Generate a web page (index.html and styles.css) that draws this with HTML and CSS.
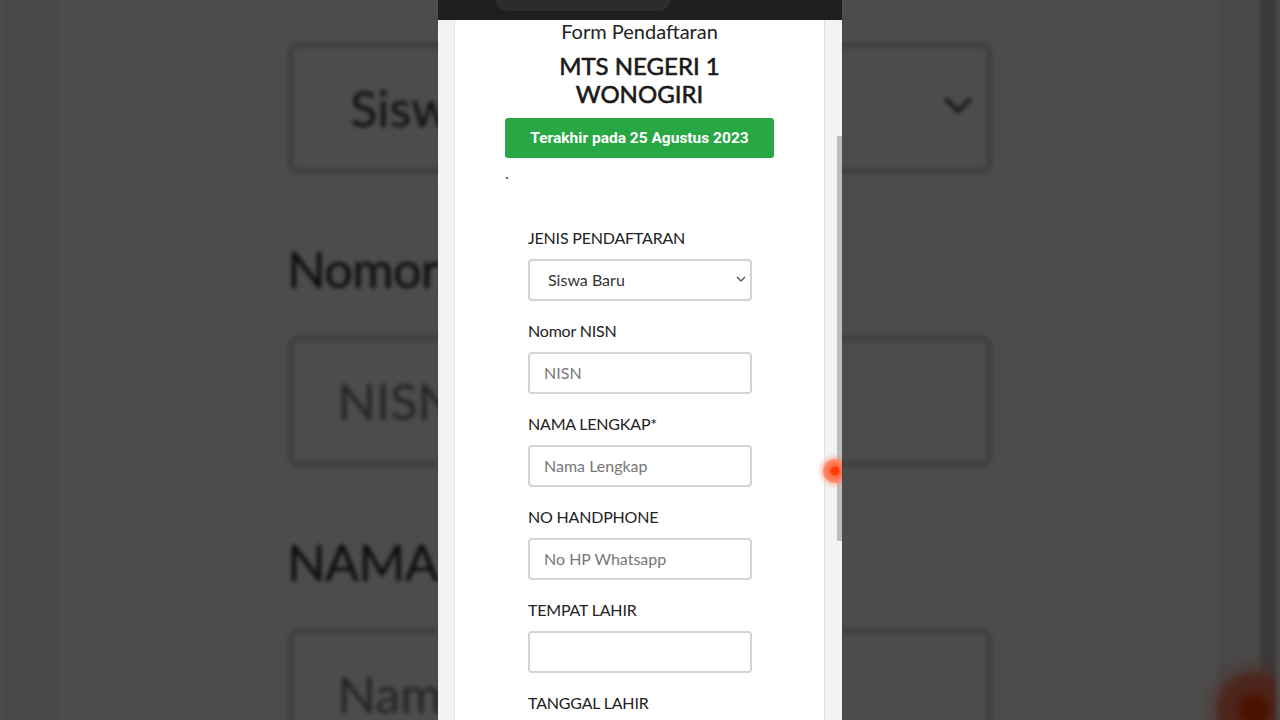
FILE: index.html
```html
<!DOCTYPE html>
<html lang="id">
<head>
    <meta charset="UTF-8">
    <meta name="viewport" content="width=device-width, initial-scale=1.0">
    <title>Form Pendaftaran - MTS Negeri 1 Wonogiri</title>
    <link rel="stylesheet" href="styles.css">
</head>
<body>
    <div class="stage">
        <!-- blurred, zoomed copy of the screen behind the video frame -->
        <div class="backdrop" aria-hidden="true">
            <div class="phone">
                <div class="topbar"><div class="notch"></div></div>
                <div class="viewport">
                    <div class="gutter"></div>
                    <div class="card">
                        <h1 class="title">Form Pendaftaran</h1>
                        <h2 class="school">MTS NEGERI 1<br>WONOGIRI</h2>
                        <div class="deadline">Terakhir pada 25 Agustus 2023</div>
                        <p class="note">.</p>
                        <div class="form">
                            <div class="field">
                                <label>JENIS PENDAFTARAN</label>
                                <div class="select-wrap">
                                    <div class="select">Siswa Baru</div>
                                    <svg class="chevron" width="10" height="6" viewBox="0 0 10 6"><polyline points="1,1 5,5 9,1" fill="none" stroke="#444" stroke-width="1.2"/></svg>
                                </div>
                            </div>
                            <div class="field">
                                <label>Nomor NISN</label>
                                <div class="input placeholder">NISN</div>
                            </div>
                            <div class="field">
                                <label>NAMA LENGKAP*</label>
                                <div class="input placeholder">Nama Lengkap</div>
                            </div>
                            <div class="field">
                                <label>NO HANDPHONE</label>
                                <div class="input placeholder">No HP Whatsapp</div>
                            </div>
                            <div class="field">
                                <label>TEMPAT LAHIR</label>
                                <div class="input"></div>
                            </div>
                            <div class="field">
                                <label>TANGGAL LAHIR</label>
                                <div class="input"></div>
                            </div>
                        </div>
                    </div>
                    <div class="side"></div>
                    <div class="scrollbar"><div class="thumb"></div></div>
                </div>
                <div class="touch"></div>
            </div>
        </div>

        <div class="phone">
            <div class="topbar"><div class="notch"></div></div>
            <div class="viewport">
                <div class="gutter"></div>
                <div class="card">
                    <h1 class="title">Form Pendaftaran</h1>
                    <h2 class="school">MTS NEGERI 1<br>WONOGIRI</h2>
                    <div class="deadline">Terakhir pada 25 Agustus 2023</div>
                    <p class="note">.</p>
                    <form class="form">
                        <div class="field">
                            <label for="jenis">JENIS PENDAFTARAN</label>
                            <div class="select-wrap">
                                <select id="jenis" class="select">
                                    <option>Siswa Baru</option>
                                    <option>Siswa Pindahan</option>
                                </select>
                                <svg class="chevron" width="10" height="6" viewBox="0 0 10 6"><polyline points="1,1 5,5 9,1" fill="none" stroke="#444" stroke-width="1.2"/></svg>
                            </div>
                        </div>
                        <div class="field">
                            <label for="nisn">Nomor NISN</label>
                            <input class="input" type="text" id="nisn" placeholder="NISN">
                        </div>
                        <div class="field">
                            <label for="nama">NAMA LENGKAP*</label>
                            <input class="input" type="text" id="nama" placeholder="Nama Lengkap">
                        </div>
                        <div class="field">
                            <label for="hp">NO HANDPHONE</label>
                            <input class="input" type="text" id="hp" placeholder="No HP Whatsapp">
                        </div>
                        <div class="field">
                            <label for="tempat">TEMPAT LAHIR</label>
                            <input class="input" type="text" id="tempat">
                        </div>
                        <div class="field">
                            <label for="tanggal">TANGGAL LAHIR</label>
                            <input class="input" type="text" id="tanggal">
                        </div>
                    </form>
                </div>
                <div class="side"></div>
                <div class="scrollbar"><div class="thumb"></div></div>
            </div>
            <div class="touch"></div>
        </div>
    </div>
</body>
</html>
```

FILE: styles.css
```css
* {
    box-sizing: border-box;
}

body {
    margin: 0;
    background-color: #4c4c4c;
    font-family: Lato, "Noto Sans", sans-serif;
}

.stage {
    position: relative;
    width: 1280px;
    height: 720px;
    overflow: hidden;
    display: flex;
    justify-content: center;
}

.backdrop {
    position: absolute;
    inset: 0;
    display: flex;
    justify-content: center;
    transform: scale(3.15);
    transform-origin: 640px 360px;
    filter: brightness(0.3) blur(0.6px);
}

.phone {
    position: relative;
    width: 404px;
    height: 720px;
    overflow: hidden;
    display: flex;
    flex-direction: column;
    background-color: #f3f3f3;
}

.topbar {
    height: 20px;
    flex-shrink: 0;
    background-color: #1c1f1c;
}

.notch {
    width: 176px;
    height: 11px;
    margin-left: 57px;
    background-color: #2b2d2b;
    border-radius: 0 0 14px 14px / 0 0 11px 11px;
}

.viewport {
    flex: 1;
    display: flex;
}

.gutter {
    width: 17px;
    background-color: #f2f2f2;
    border-right: 1px solid #e4e4e4;
}

.card {
    width: 369px;
    background-color: #fff;
    display: flex;
    flex-direction: column;
    align-items: center;
}

.side {
    width: 13px;
    background-color: #f3f3f3;
    border-left: 1px solid #e2e2e2;
}

.scrollbar {
    width: 5px;
    padding-top: 116px;
    background-color: #f3f3f3;
}

.thumb {
    height: 405px;
    background-color: #bdbdbd;
}

.title {
    margin: 0;
    font-size: 20px;
    font-weight: 400;
    line-height: 22px;
    color: #222;
}

.school {
    margin: 10px 0 0;
    font-size: 24px;
    font-weight: 400;
    line-height: 28px;
    text-align: center;
    color: #1a1a1a;
    -webkit-text-stroke: 0.6px #1a1a1a;
}

.deadline {
    margin-top: 10px;
    width: 269px;
    height: 40px;
    display: flex;
    align-items: center;
    justify-content: center;
    background-color: #28a745;
    border-radius: 3px;
    color: #fff;
    font-family: Roboto, "Liberation Sans", sans-serif;
    font-size: 15.5px;
    font-weight: 700;
}

.note {
    align-self: flex-start;
    margin: 5px 0 0 50px;
    font-size: 16px;
    line-height: 19px;
    color: #333;
}

.form {
    align-self: stretch;
    margin: 46px 0 0;
    padding: 0 73px;
}

.field {
    margin-bottom: 20px;
}

label {
    display: block;
    margin-bottom: 11px;
    font-size: 16px;
    line-height: 20px;
    letter-spacing: -0.2px;
    color: #222;
}

.input,
.select {
    display: flex;
    align-items: center;
    width: 224px;
    height: 42px;
    padding: 0 14px 2px;
    border: 2px solid #d4d4d4;
    border-radius: 4px;
    background-color: #fff;
    font-family: Lato, "Noto Sans", sans-serif;
    font-size: 16px;
    color: #333;
    outline: none;
}

.input::placeholder,
.placeholder {
    color: #777;
}

.select-wrap {
    position: relative;
    width: 224px;
}

.select {
    appearance: none;
    -webkit-appearance: none;
    padding-left: 18px;
    color: #333;
}

.chevron {
    position: absolute;
    right: 6px;
    top: 17px;
}

.touch {
    position: absolute;
    left: 379px;
    top: 453px;
    width: 36px;
    height: 36px;
    border-radius: 50%;
    background: radial-gradient(circle, #ff3d00 0 4px, #ff6a45 5px, #ff8a6c 11px, rgba(255, 140, 110, 0.35) 13px, rgba(255, 160, 130, 0) 18px);
}
```
